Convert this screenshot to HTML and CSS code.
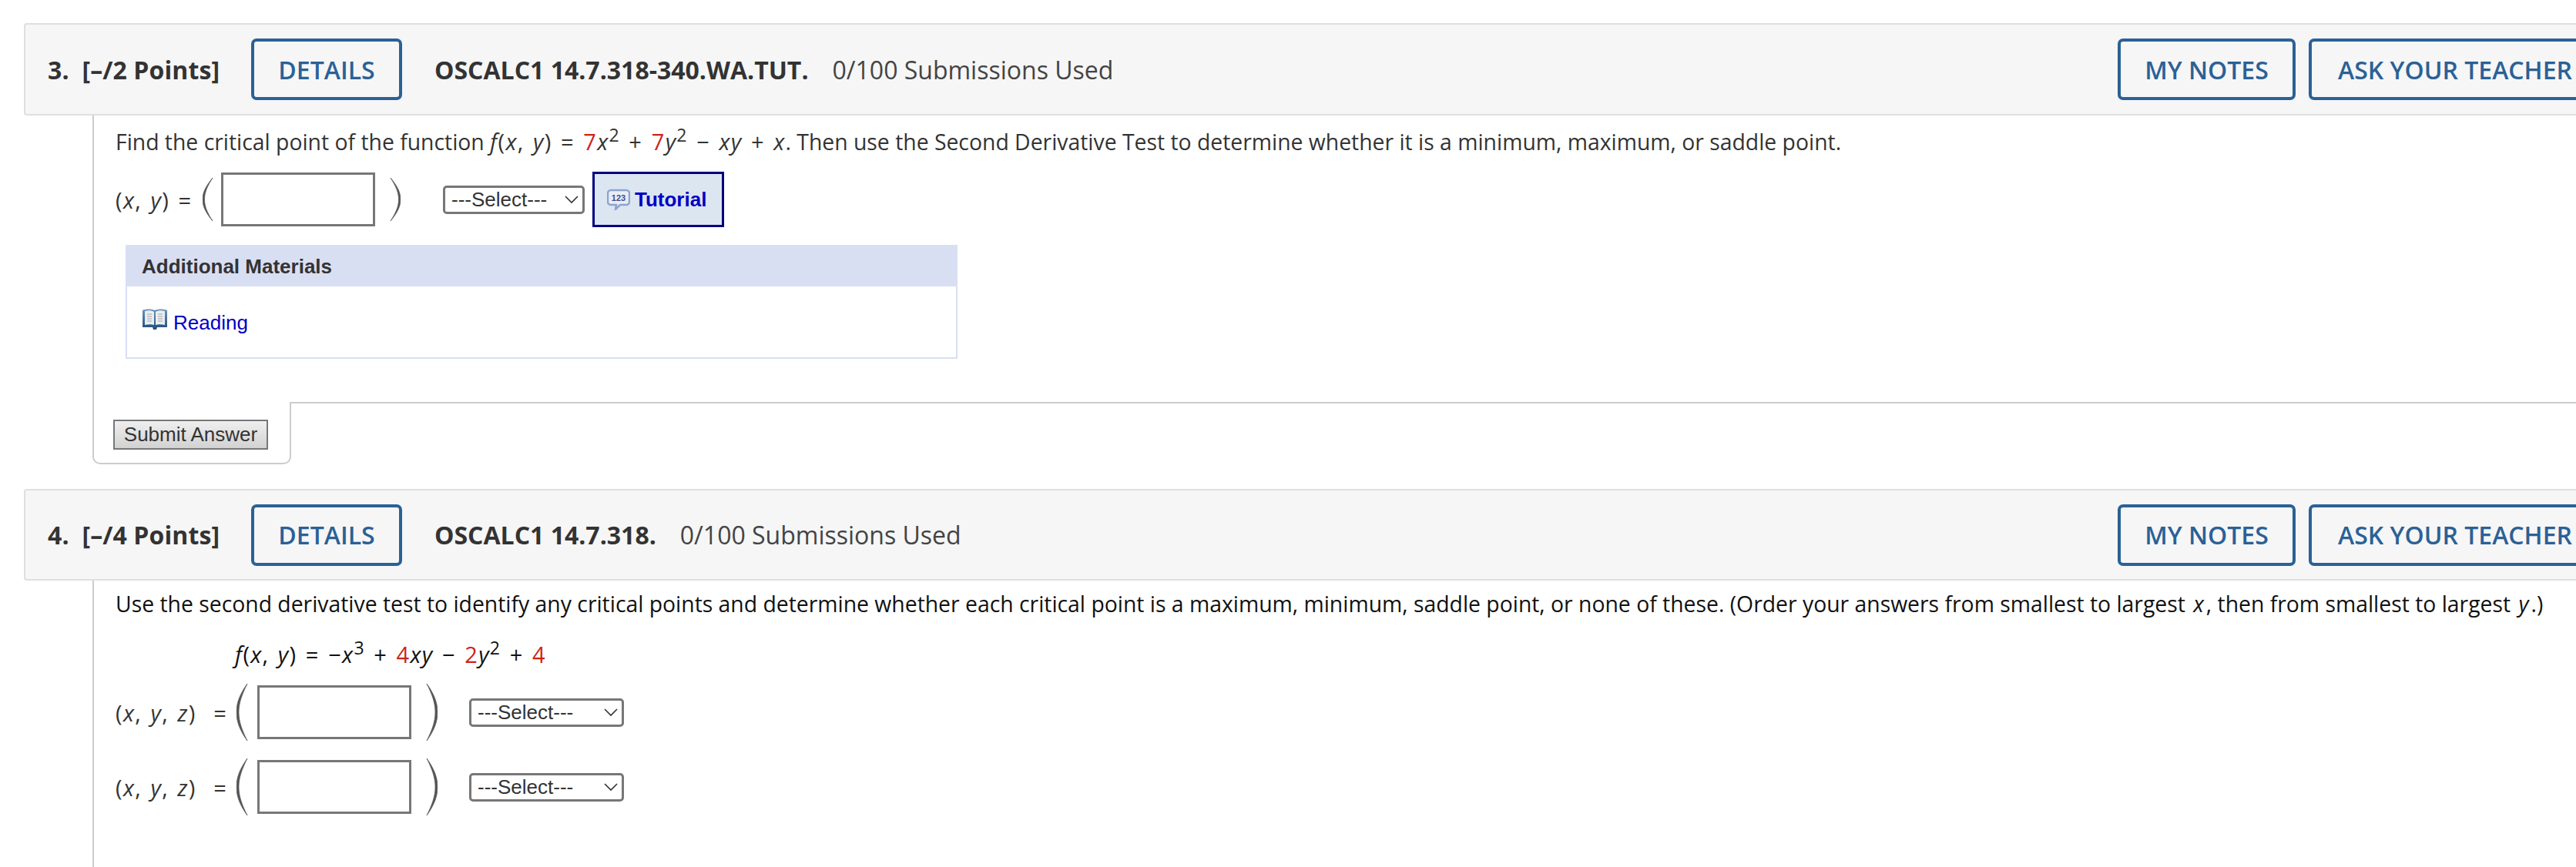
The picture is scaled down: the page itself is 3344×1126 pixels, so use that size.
FILE: index.html
```html
<!DOCTYPE html>
<html lang="en">
<head>
  <meta charset="UTF-8" />
  <title>Assignment questions</title>
  <link rel="stylesheet" href="styles.css">
</head>
<body>

  <!-- Question 3 -->
  <section class="question">
    <header class="q-head">
      <span class="q-num">3.&nbsp; [–/2 Points]</span>
      <a class="btn" href="#">DETAILS</a>
      <span class="q-code">OSCALC1 14.7.318-340.WA.TUT.</span>
      <span class="q-subs">0/100 Submissions Used</span>
      <span class="spacer"></span>
      <a class="btn btn-notes" href="#">MY NOTES</a>
      <a class="btn btn-ask" href="#">ASK YOUR TEACHER</a>
    </header>
    <div class="q-body q3-body">
      <p class="q-text q3-text">Find the critical point of the function <span class="m"><i>f</i>(<i>x</i>, <i>y</i>) = <span class="red">7</span><i>x</i><sup>2</sup> + <span class="red">7</span><i>y</i><sup>2</sup> − <i>xy</i> + <i>x</i></span>. Then use the Second Derivative Test to determine whether it is a minimum, maximum, or saddle point.</p>
      <div class="answer-row q3-row">
        <span class="math m">(<i>x</i>, <i>y</i>) =</span>
        <svg class="paren paren-small" viewBox="0 0 14 58"><path d="M13 1C4 12 0 20 0 29c0 9 4 17 13 28C6 46 2.5 38 2.5 29S6 12 13 1z" /></svg>
        <input class="answer" type="text" />
        <svg class="paren paren-small paren-close" viewBox="0 0 14 58"><path d="M13 1C4 12 0 20 0 29c0 9 4 17 13 28C6 46 2.5 38 2.5 29S6 12 13 1z" /></svg>
        <select class="pick q3-pick"><option>---Select---</option></select>
        <a class="tutorial" href="#">
          <svg class="tut-icon" viewBox="0 0 30 28">
            <path d="M5 2h20a4 4 0 0 1 4 4v11a4 4 0 0 1-4 4h-8l-6 6 1-6H5a4 4 0 0 1-4-4V6a4 4 0 0 1 4-4z" />
            <text x="15" y="15.5" text-anchor="middle">123</text>
          </svg>
          Tutorial
        </a>
      </div>
      <div class="materials">
        <div class="materials-title">Additional Materials</div>
        <div class="materials-body">
          <svg class="book" viewBox="0 0 32 28">
            <defs>
              <linearGradient id="bookCover" x1="0" y1="0" x2="0" y2="1">
                <stop offset="0" stop-color="#6d95bd" />
                <stop offset="1" stop-color="#1f4d7c" />
              </linearGradient>
            </defs>
            <path class="book-cover" d="M0 2c5-2 11-2 16 0 5-2 11-2 16 0v22H19l-1 3h-4l-1-3H0z" />
            <path class="book-page" d="M3 3c4-1 9-1 12 1v17c-3-1-8-1-12 0zM29 3c-4-1-9-1-12 1v17c3-1 8-1 12 0z" />
            <path class="book-lines" d="M6 7h6M6 10h6M6 13h6M6 16h6M20 7h6M20 10h6M20 13h6M20 16h6" />
          </svg>
          <a class="reading" href="#">Reading</a>
        </div>
      </div>
    </div>
    <div class="q-foot">
      <div class="submit-tab"><button class="submit" type="button">Submit Answer</button></div>
      <div class="foot-rest"></div>
    </div>
  </section>

  <!-- Question 4 -->
  <section class="question q4">
    <header class="q-head q4-head">
      <span class="q-num">4.&nbsp; [–/4 Points]</span>
      <a class="btn" href="#">DETAILS</a>
      <span class="q-code">OSCALC1 14.7.318.</span>
      <span class="q-subs">0/100 Submissions Used</span>
      <span class="spacer"></span>
      <a class="btn btn-notes" href="#">MY NOTES</a>
      <a class="btn btn-ask" href="#">ASK YOUR TEACHER</a>
    </header>
    <div class="q-body q4-body">
      <p class="q-text q4-text">Use the second derivative test to identify any critical points and determine whether each critical point is a maximum, minimum, saddle point, or none of these. (Order your answers from smallest to largest <i>x</i>, then from smallest to largest <i>y</i>.)</p>
      <p class="formula m"><i>f</i>(<i>x</i>, <i>y</i>) = −<i>x</i><sup>3</sup> + <span class="red">4</span><i>xy</i> − <span class="red">2</span><i>y</i><sup>2</sup> + <span class="red">4</span></p>
      <div class="answer-row q4-row">
        <span class="math math-xyz m">(<i>x</i>, <i>y</i>, <i>z</i>)&nbsp; =</span>
        <svg class="paren paren-big" viewBox="0 0 15 76"><path d="M14 1C4 15 0 26 0 38c0 12 4 23 14 37C7 61 3 50 3 38S7 15 14 1z" /></svg>
        <input class="answer" type="text" />
        <svg class="paren paren-big paren-close" viewBox="0 0 15 76"><path d="M14 1C4 15 0 26 0 38c0 12 4 23 14 37C7 61 3 50 3 38S7 15 14 1z" /></svg>
        <select class="pick q4-pick"><option>---Select---</option></select>
      </div>
      <div class="answer-row q4-row">
        <span class="math math-xyz m">(<i>x</i>, <i>y</i>, <i>z</i>)&nbsp; =</span>
        <svg class="paren paren-big" viewBox="0 0 15 76"><path d="M14 1C4 15 0 26 0 38c0 12 4 23 14 37C7 61 3 50 3 38S7 15 14 1z" /></svg>
        <input class="answer" type="text" />
        <svg class="paren paren-big paren-close" viewBox="0 0 15 76"><path d="M14 1C4 15 0 26 0 38c0 12 4 23 14 37C7 61 3 50 3 38S7 15 14 1z" /></svg>
        <select class="pick q4-pick"><option>---Select---</option></select>
      </div>
    </div>
  </section>

</body>
</html>
```

FILE: styles.css
```css
/* --- Base --- */
:root {
  --blue: #2a6196;
  --head-bg: #f6f6f6;
  --head-line: #dfdfdf;
  --rule: #cccccc;
  --text: #333333;
  --red: #cc2418;
  --link: #0000c4;
  --panel: #d9dff3;
}
* {
  margin: 0;
  padding: 0;
  box-sizing: border-box;
}
html, body {
  height: 100%;
  overflow: hidden;
}
body {
  font-family: "Open Sans", sans-serif;
  background: #fff;
  color: var(--text);
  padding: 30px 0 0 31px;
}

/* --- Question header --- */
.question {
  width: 3400px;
}
.q4 {
  margin-top: 32px;
}
.q-head {
  height: 120px;
  display: flex;
  align-items: center;
  background: var(--head-bg);
  border: 2px solid var(--head-line);
  border-radius: 4px;
  padding-left: 29px;
  font-size: 32px;
}
.q4-head {
  height: 119px;
}
.q-num {
  font-weight: 700;
  font-size: 32px;
  letter-spacing: 0.1px;
  width: 264px;
  white-space: nowrap;
}
.q-code {
  font-weight: 700;
  margin-left: 42px;
  white-space: nowrap;
}
.q-subs {
  margin-left: 31px;
  white-space: nowrap;
  color: #444;
}
.spacer {
  flex: 1;
}
.btn {
  display: flex;
  align-items: center;
  justify-content: center;
  height: 80px;
  width: 196px;
  border: 4px solid var(--blue);
  border-radius: 7px;
  color: var(--blue);
  font-weight: 600;
  font-size: 32px;
  text-decoration: none;
  white-space: nowrap;
}
.btn-notes {
  width: 231px;
}
.btn-ask {
  width: 380px;
  margin-left: 17px;
  margin-right: 52px;
}

/* --- Question body --- */
.q-body {
  margin-left: 89px;
  border-left: 2px solid var(--rule);
  padding-left: 28px;
}
.q-text {
  white-space: nowrap;
}
.q3-body {
  height: 372px;
  padding-top: 13px;
}
.q3-text {
  font-size: 28.35px;
  line-height: 42px;
}
.q4-body {
  height: 400px;
  padding-top: 8px;
}
.q4-text {
  font-size: 28.35px;
  line-height: 44px;
  color: #111;
}
.q4-text i {
  margin: 0 3px;
}
.m {
  font-size: 29px;
  letter-spacing: 1.35px;
  word-spacing: 2.5px;
}
sup {
  font-size: 23px;
  line-height: 0;
  vertical-align: 11px;
}
.red {
  color: var(--red);
}

/* --- Answer rows --- */
.answer-row {
  display: flex;
  align-items: center;
}
.q3-row {
  margin-top: 18px;
  height: 72px;
}
.q4-row {
  height: 76px;
  margin-top: 21px;
}
.formula {
  line-height: 44px;
  margin: 22px 0 0 155px;
  color: #111;
  white-space: nowrap;
}
.q4-text + .formula + .q4-row {
  margin-top: 15px;
}
.math {
  width: 113px;
  white-space: nowrap;
}
.math-xyz {
  width: 157px;
}
.paren {
  flex: none;
  fill: #555;
  stroke: #555;
  stroke-width: 0.7;
}
.paren-close {
  transform: scaleX(-1);
}
.paren-small {
  width: 14px;
  height: 58px;
}
.paren-big {
  width: 15px;
  height: 76px;
}
.answer {
  width: 200px;
  height: 70px;
  border: 3px solid #777;
  background: #fff;
}
.paren + .answer {
  margin: 0 19px 0 10px;
}
.paren-big + .answer {
  margin: 0 19px 0 12px;
}
.pick {
  appearance: none;
  font-family: "Liberation Sans", sans-serif;
  font-size: 26px;
  color: #333;
  height: 37px;
  padding-left: 8px;
  border: 3px solid #777;
  border-radius: 5px;
  background: #fff url("data:image/svg+xml,%3Csvg xmlns='http://www.w3.org/2000/svg' width='18' height='11'%3E%3Cpath d='M1 1l8 8 8-8' fill='none' stroke='%23333' stroke-width='1.6'/%3E%3C/svg%3E") no-repeat right 5px center;
}
.q3-pick {
  width: 184px;
  margin-left: 55px;
}
.q4-pick {
  width: 201px;
  margin-left: 41px;
}
.tutorial {
  display: flex;
  align-items: center;
  gap: 6px;
  height: 72px;
  width: 171px;
  margin-left: 10px;
  padding-left: 16px;
  background: #dce6f0;
  border: 3px solid #000080;
  color: var(--link);
  font-family: "Liberation Sans", sans-serif;
  font-weight: 700;
  font-size: 26px;
  text-decoration: none;
}
.tut-icon {
  width: 30px;
  height: 28px;
  flex: none;
}
.tut-icon path {
  fill: #e8edf6;
  stroke: #8ea4cf;
  stroke-width: 2.5;
}
.tut-icon text {
  font-family: "Liberation Sans", sans-serif;
  font-size: 11px;
  font-weight: 700;
  fill: #3f4d8a;
}

/* --- Additional materials --- */
.materials {
  width: 1080px;
  margin: 23px 0 0 13px;
  border: 2px solid var(--panel);
  font-family: "Liberation Sans", sans-serif;
  font-size: 26px;
  height: 148px;
}
.materials-title {
  height: 52px;
  line-height: 52px;
  padding-left: 19px;
  background: var(--panel);
  font-weight: 700;
}
.materials-body {
  display: flex;
  align-items: center;
  gap: 8px;
  padding: 26px 0 0 20px;
}
.book {
  width: 32px;
  height: 28px;
  flex: none;
  margin-top: -4px;
}
.book-cover {
  fill: url(#bookCover);
}
.book-page {
  fill: #e9edf0;
}
.book-lines {
  fill: none;
  stroke: #b9bec4;
  stroke-width: 1.6;
}
.reading {
  color: var(--link);
  text-decoration: none;
  padding-top: 6px;
}

/* --- Submit tab --- */
.q-foot {
  display: flex;
  margin-left: 89px;
  height: 81px;
}
.submit-tab {
  width: 258px;
  border: 2px solid var(--rule);
  border-top: none;
  border-radius: 0 0 10px 10px;
  padding: 23px 0 0 25px;
}
.foot-rest {
  flex: 1;
  border-top: 2px solid var(--rule);
}
.submit {
  display: block;
  width: 201px;
  height: 39px;
  border: 2px solid #777;
  background: linear-gradient(#efefef, #d2d2d2);
  color: #333;
  font-family: "Liberation Sans", sans-serif;
  font-size: 26px;
}
```
